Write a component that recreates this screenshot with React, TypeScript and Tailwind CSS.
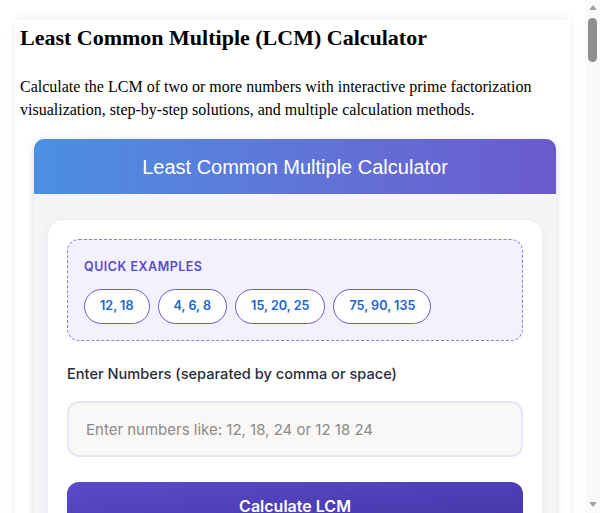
import { useState } from 'react';

const examples = ['12, 18', '4, 6, 8', '15, 20, 25', '75, 90, 135'];

function FakeScrollbar() {
  return (
    <div className="flex w-[15px] shrink-0 flex-col items-center bg-[#fafafa]">
      <div className="mt-[5px] h-0 w-0 border-x-[4.5px] border-b-[5px] border-x-transparent border-b-[#a3a3a3]" />
      <div className="mt-[8px] h-[44px] w-[9px] rounded-full bg-[#8f8f8f]" />
      <div className="flex-1" />
      <div className="mb-[6px] h-0 w-0 border-x-[4.5px] border-t-[5px] border-x-transparent border-t-[#a3a3a3]" />
    </div>
  );
}

export default function App() {
  const [value, setValue] = useState('');

  return (
    <div className="flex h-[513px] overflow-hidden bg-white">
      <div className="flex-1 overflow-hidden pt-[20px]">
        <div className="mx-[15px] bg-white px-[5px] pt-[5px] pb-[30px] shadow-[0_0_10px_rgba(0,0,0,0.08)]">
          <h1 className="text-[22px] font-bold leading-[25px] text-black [font-family:'Liberation_Serif',serif]">
            Least Common Multiple (LCM) Calculator
          </h1>
          <p className="mt-[25px] text-[16px] leading-[23px] text-black [font-family:'Liberation_Serif',serif]">
            Calculate the LCM of two or more numbers with interactive prime factorization visualization, step-by-step solutions, and multiple calculation methods.
          </p>

          {/* Calculator */}
          <div className="mt-[18px] ml-[14px] mr-[9px] overflow-hidden rounded-[10px] bg-[#f5f5f7] shadow-[0_2px_10px_rgba(0,0,0,0.15)]">
            <div className="flex h-[55px] items-center justify-center bg-gradient-to-r from-[#4a90e2] to-[#6a5acd] text-[20px] text-white [font-family:'Liberation_Sans',Arial,sans-serif]">
              Least Common Multiple Calculator
            </div>

            <div className="px-[13px] pt-[25px] pb-[30px] [font-family:Inter,'Noto_Sans',sans-serif]">
              <div className="rounded-[16px] border border-[#ececf2] bg-white p-[19px] shadow-[0_2px_8px_rgba(0,0,0,0.04)]">
                {/* Quick examples */}
                <div className="rounded-[12px] border border-dashed border-[#8e7be6] bg-[#f3f1fe] px-4 pt-[18px] pb-[16px]">
                  <div className="text-[12.5px] font-semibold uppercase leading-[17px] tracking-[0.5px] text-[#5a4bc8]">
                    Quick Examples
                  </div>
                  <div className="mt-[14px] flex flex-wrap gap-2">
                    {examples.map((ex) => (
                      <button
                        key={ex}
                        onClick={() => setValue(ex)}
                        className="h-[35px] rounded-full border border-[#6a5acd] bg-white px-[15px] text-[12.6px] font-semibold text-[#1a63cf]"
                      >
                        {ex}
                      </button>
                    ))}
                  </div>
                </div>

                <label className="mt-[23px] block text-[14.6px] font-medium leading-[20px] text-[#2b2b3a]">
                  Enter Numbers (separated by comma or space)
                </label>
                <input
                  value={value}
                  onChange={(e) => setValue(e.target.value)}
                  placeholder="Enter numbers like: 12, 18, 24 or 12 18 24"
                  className="mt-[17px] block h-[56px] w-full rounded-[12px] border-2 border-[#e8e5f3] bg-[#f9f8f7] px-[17px] text-[15px] text-[#333] outline-none placeholder:text-[#8a8a8a]"
                />

                <button className="mt-[25px] h-[47px] w-full rounded-[12px] bg-gradient-to-br from-[#5b4bc8] to-[#4434a6] text-[16px] font-semibold text-white">
                  Calculate LCM
                </button>

                <div className="mt-[24px] h-[200px] rounded-[12px] border border-[#ececf2] bg-[#fafafa]" />
              </div>
            </div>
          </div>
        </div>
      </div>
      <FakeScrollbar />
    </div>
  );
}
